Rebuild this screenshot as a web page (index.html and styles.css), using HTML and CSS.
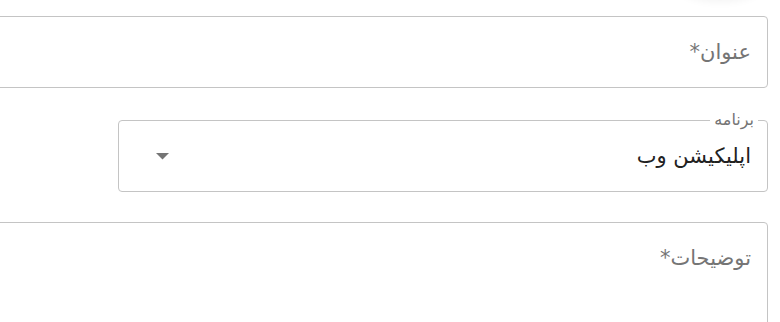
FILE: index.html
```html
<!DOCTYPE html>
<html lang="fa" dir="rtl">
<head>
<meta charset="utf-8">
<link rel="stylesheet" href="styles.css">
</head>
<body>
<div class="shade"></div>
<form class="form">
  <div class="field field-wide">
    <span class="placeholder">عنوان*</span>
  </div>
  <div class="field field-select">
    <span class="legend">برنامه</span>
    <span class="value">اپلیکیشن وب</span>
    <svg class="arrow" width="13" height="7" viewBox="0 0 13 7" aria-hidden="true"><path d="M0 0 L6.5 6.5 L13 0 Z" fill="#757575"/></svg>
  </div>
  <div class="field field-wide field-multi">
    <span class="placeholder">توضیحات*</span>
  </div>
</form>
</body>
</html>
```
FILE: styles.css
```css
html, body {
  margin: 0;
  padding: 0;
  background: #fff;
  overflow: hidden;
}
body {
  font-family: "DejaVu Sans", sans-serif;
  direction: rtl;
  position: relative;
  height: 322px;
}
.shade {
  position: absolute;
  top: -30px;
  right: 20px;
  width: 80px;
  height: 30px;
  border-radius: 50%;
  box-shadow: 0 2px 8px rgba(0, 0, 0, 0.05);
}
.form {
  display: flex;
  flex-direction: column;
  padding: 16px 12px 0 0;
}
.field {
  position: relative;
  box-sizing: border-box;
  height: 72px;
  border: 1px solid #c4c4c4;
  border-radius: 4px;
  display: flex;
  align-items: center;
  padding: 0 16px 0 37px;
}
.field-wide {
  margin-left: -20px;
}
.field-select {
  margin-top: 32px;
  margin-left: 118px;
}
.field-multi {
  margin-top: 30px;
  height: 130px;
  align-items: flex-start;
  padding-top: 21px;
}
.placeholder {
  font-size: 21px;
  color: #757575;
  line-height: 28px;
}
.value {
  font-size: 21px;
  color: #212121;
  line-height: 28px;
  flex: 1;
}
.arrow {
  display: block;
  flex: none;
}
.legend {
  position: absolute;
  top: -11px;
  right: 9px;
  padding: 0 4px;
  background: #fff;
  font-size: 16px;
  line-height: 20px;
  color: #757575;
}
```
